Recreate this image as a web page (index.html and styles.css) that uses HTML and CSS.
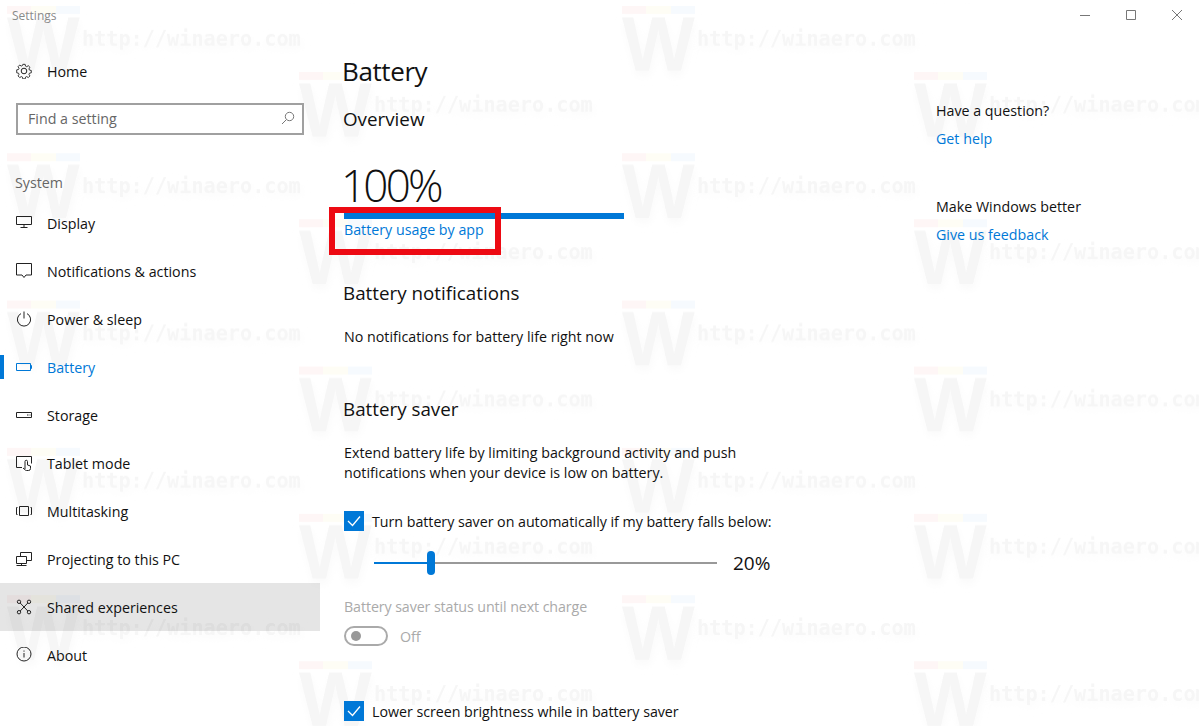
FILE: index.html
```html
<!DOCTYPE html>
<html lang="en">
    <head>
        <meta charset="utf-8">
        <title>Settings</title>
        <link rel="stylesheet" href="styles.css">
    </head>
    <body>
        <svg class="watermark" width="1199" height="726" aria-hidden="true">
            <defs>
                <filter id="soft" x="-20%" y="-20%" width="140%" height="150%"><feGaussianBlur stdDeviation="4"/></filter>
                <filter id="crisp" x="-5%" y="-5%" width="110%" height="110%"><feGaussianBlur stdDeviation="0.5"/></filter>
                <pattern id="wm" width="615" height="147.3" patternUnits="userSpaceOnUse" x="0" y="0">
                    <g id="mark">
                        <text x="8" y="76" class="wm-w wm-glow" filter="url(#soft)">W</text>
                        <text x="7" y="71" class="wm-w" filter="url(#crisp)">W</text>
                        <rect x="7" y="6" width="24" height="8" fill="#fef6f6"/>
                        <rect x="31" y="6" width="25" height="8" fill="#fefdf5"/>
                        <rect x="56" y="6" width="24" height="8" fill="#f6fafe"/>
                        <text x="83" y="50" class="wm-url wm-glow" filter="url(#soft)">http://winaero.com</text>
                        <text x="82" y="46" class="wm-url" filter="url(#crisp)">http://winaero.com</text>
                    </g>
                </pattern>
                <pattern id="wm2" width="615" height="147.3" patternUnits="userSpaceOnUse" x="292" y="66">
                    <use href="#mark"/>
                </pattern>
            </defs>
            <rect width="1199" height="726" fill="url(#wm)"/>
            <rect width="1199" height="726" fill="url(#wm2)"/>
        </svg>

        <div class="window">
            <aside class="sidebar">
                <div class="app-title">Settings</div>
                <a class="nav-item home">
                    <svg class="icon" viewBox="0 0 16 16"><path d="M6.7.6h2.6l.4 2 1.3.6 1.8-1.1 1.8 1.8-1.1 1.8.6 1.3 2 .4v2.6l-2 .4-.6 1.3 1.1 1.8-1.8 1.8-1.8-1.1-1.3.6-.4 2H6.7l-.4-2-1.3-.6-1.8 1.1-1.8-1.8 1.1-1.8-.6-1.3-2-.4V6.7l2-.4.6-1.3-1.1-1.8 1.8-1.8 1.8 1.1 1.3-.6z" transform="translate(.8 .8) scale(.9)"/><circle cx="8" cy="8" r="2.8"/></svg>
                    <span>Home</span>
                </a>
                <div class="search">
                    <span>Find a setting</span>
                    <svg class="search-icon" viewBox="0 0 14 14"><circle cx="8.5" cy="5.5" r="4.2"/><path d="M5.5 8.5L1 13"/></svg>
                </div>
                <div class="group-title">System</div>
                <nav>
                    <a class="nav-item">
                        <svg class="icon" viewBox="0 0 16 16"><path d="M.5 1.500h15v8H.5zM8 9.500v2.500M4.500 12.500h7"/></svg>
                        <span>Display</span>
                    </a>
                    <a class="nav-item">
                        <svg class="icon" viewBox="0 0 16 16"><path d="M.5.5h15v11.500h-5.500L8 14.500 6 12H.5z"/></svg>
                        <span>Notifications &amp; actions</span>
                    </a>
                    <a class="nav-item">
                        <svg class="icon" viewBox="0 0 16 16"><path d="M5 2.600a6.600 6.600 0 1 0 6 0M8 .5v7"/></svg>
                        <span>Power &amp; sleep</span>
                    </a>
                    <a class="nav-item active">
                        <svg class="icon" viewBox="0 0 16 16"><path d="M.5 4.500h14v7H.5zM14.500 6.500h1v3h-1"/></svg>
                        <span>Battery</span>
                    </a>
                    <a class="nav-item">
                        <svg class="icon" viewBox="0 0 16 16"><path d="M.5 5.500h15v5H.5zM11 8h1.500M13.500 8h1"/></svg>
                        <span>Storage</span>
                    </a>
                    <a class="nav-item">
                        <svg class="icon" viewBox="0 0 16 16"><path d="M6 12.500H.5v-11h15v7M9 14V6.500a1.200 1.200 0 0 1 2.500 0V10l3 1v2.500a2 2 0 0 1-2 2H10.500a2 2 0 0 1-1.500-.8L7 13"/></svg>
                        <span>Tablet mode</span>
                    </a>
                    <a class="nav-item">
                        <svg class="icon" viewBox="0 0 16 16"><path d="M3.500 3.500h9v9h-9zM1.500 4.500H.5v7h1M14.500 4.500h1v7h-1"/></svg>
                        <span>Multitasking</span>
                    </a>
                    <a class="nav-item">
                        <svg class="icon" viewBox="0 0 16 16"><path d="M4.500 5V1.500h11v8H11M.5 5.500h10v7H.5zM.5 14.500h10M5.500 12.500v2"/></svg>
                        <span>Projecting to this PC</span>
                    </a>
                    <a class="nav-item hovered">
                        <svg class="icon" viewBox="0 0 16 16"><circle cx="3" cy="2.800" r="1.700"/><circle cx="13" cy="2.800" r="1.700"/><circle cx="3" cy="13.200" r="1.700"/><circle cx="13" cy="13.200" r="1.700"/><path d="M4.200 4l7.600 8M11.800 4l-7.600 8"/></svg>
                        <span>Shared experiences</span>
                    </a>
                    <a class="nav-item">
                        <svg class="icon" viewBox="0 0 16 16"><circle cx="8" cy="7" r="7"/><path d="M8 6v4.500M8 3.500v1.200"/></svg>
                        <span>About</span>
                    </a>
                </nav>
            </aside>

            <main class="content">
                <h1>Battery</h1>
                <h2 class="overview">Overview</h2>
                <div class="percent">100%</div>
                <div class="meter"></div>
                <a class="link usage">Battery usage by app</a>

                <h2 class="notif-title">Battery notifications</h2>
                <p class="notif-text">No notifications for battery life right now</p>

                <h2 class="saver-title">Battery saver</h2>
                <p class="saver-text">Extend battery life by limiting background activity and push<br>notifications when your device is low on battery.</p>

                <label class="check auto">
                    <svg class="box" viewBox="0 0 20 20"><path d="M4 10l4.500 4.500L16 5.500"/></svg>
                    <span>Turn battery saver on automatically if my battery falls below:</span>
                </label>
                <div class="slider-row">
                    <div class="slider"><div class="slider-fill"></div><div class="slider-thumb"></div></div>
                    <span class="slider-value">20%</span>
                </div>
                <div class="disabled status">Battery saver status until next charge</div>
                <div class="toggle-row disabled">
                    <span class="toggle"><i></i></span>
                    <span>Off</span>
                </div>
                <label class="check lower">
                    <svg class="box" viewBox="0 0 20 20"><path d="M4 10l4.500 4.500L16 5.500"/></svg>
                    <span>Lower screen brightness while in battery saver</span>
                </label>
            </main>

            <aside class="help">
                <div class="help-block">
                    <div>Have a question?</div>
                    <a class="link">Get help</a>
                </div>
                <div class="help-block">
                    <div>Make Windows better</div>
                    <a class="link">Give us feedback</a>
                </div>
            </aside>

            <div class="controls">
                <svg viewBox="0 0 10 10"><path d="M0 5.500h10"/></svg>
                <svg viewBox="0 0 10 10"><path d="M.5.500h9v9h-9z"/></svg>
                <svg viewBox="0 0 10 10"><path d="M0 0l10 10M10 0L0 10"/></svg>
            </div>
        </div>
        <div class="highlight"></div>
    </body>
</html>
```

FILE: styles.css
```css
* {
    margin: 0;
    padding: 0;
    box-sizing: border-box;
}
html, body {
    height: 726px;
    overflow: hidden;
}
body {
    position: relative;
    background-color: #fff;
    color: #111;
    font-family: "Open Sans", "Noto Sans", sans-serif;
    font-size: 14.25px;
}
a {
    display: block;
}
h1, h2 {
    font-weight: 400;
}

.watermark {
    position: absolute;
    left: 0;
    top: 0;
}
.wm-w {
    font-family: "Liberation Sans", sans-serif;
    font-weight: 700;
    font-size: 77px;
    fill: #f6f6f6;
}
.wm-url {
    font-family: "DejaVu Sans Mono", "Liberation Mono", monospace;
    font-weight: 700;
    font-size: 20.2px;
    fill: #f6f6f6;
}
.wm-glow {
    fill: #fafafa;
}

.window {
    position: relative;
    display: flex;
    height: 726px;
}
.sidebar {
    width: 320px;
    flex-shrink: 0;
}
.app-title {
    padding: 7px 0 0 12px;
    height: 47px;
    font-size: 12px;
    color: #8a8a8a;
}
.nav-item {
    display: flex;
    align-items: center;
    height: 48px;
    padding-left: 16px;
    position: relative;
}
.nav-item span {
    margin-left: 15px;
}
.icon {
    width: 16px;
    height: 16px;
    fill: none;
    stroke: #222;
    stroke-width: 1;
}
.nav-item.active {
    color: #0078d7;
}
.nav-item.active .icon {
    stroke: #0078d7;
}
.nav-item.active::before {
    content: "";
    position: absolute;
    left: 0;
    top: 12px;
    width: 4px;
    height: 24px;
    background-color: #0078d7;
}
.nav-item.hovered {
    background-color: rgba(0, 0, 0, 0.1);
}
.search {
    display: flex;
    align-items: center;
    justify-content: space-between;
    width: 288px;
    height: 32px;
    margin: 8px 0 0 16px;
    padding: 0 7px 2px 10px;
    border: 2px solid #a0a0a0;
    color: #666;
}
.search-icon {
    width: 14px;
    height: 14px;
    fill: none;
    stroke: #777;
}
.group-title {
    padding: 38px 0 0 15px;
    height: 64px;
    color: #666;
}

.content {
    width: 596px;
    flex-shrink: 0;
    padding: 53px 0 0 24px;
}
h1 {
    font-size: 26px;
    letter-spacing: -0.4px;
    line-height: 36px;
    margin-left: -2px;
}
h2 {
    font-size: 18.8px;
    line-height: 26px;
    margin-left: -1px;
}
.overview {
    margin-top: 17px;
}
.percent {
    margin-top: 25px;
    font-size: 44px;
    font-weight: 300;
    letter-spacing: -2.8px;
    line-height: 56px;
    margin-left: -3px;
}
.meter {
    width: 280px;
    height: 6px;
    background-color: #0078d7;
}
.link {
    color: #0078d7;
}
.usage {
    margin-top: 1px;
    line-height: 20px;
}
.notif-title {
    margin-top: 40px;
}
.notif-text {
    margin-top: 21px;
    line-height: 20px;
}
.saver-title {
    margin-top: 49px;
}
.saver-text {
    margin-top: 21px;
    line-height: 20px;
}
.check {
    display: flex;
    align-items: center;
    gap: 8px;
}
.check span {
    letter-spacing: -0.03px;
}
.box {
    width: 20px;
    height: 20px;
    background-color: #0078d7;
    fill: none;
    stroke: #fff;
    stroke-width: 1.300;
}
.auto {
    margin-top: 28px;
}
.slider-row {
    display: flex;
    align-items: center;
    margin-top: 19px;
    padding-left: 30px;
}
.slider {
    position: relative;
    width: 343px;
    height: 2px;
    background-color: #999;
}
.slider-fill {
    width: 57px;
    height: 2px;
    background-color: #0078d7;
}
.slider-thumb {
    position: absolute;
    left: 53px;
    top: -11px;
    width: 8px;
    height: 24px;
    border-radius: 4px;
    background-color: #0078d7;
}
.slider-value {
    margin-left: 16px;
    font-size: 19px;
}
.disabled {
    color: #aaa;
}
.status {
    margin-top: 21px;
    line-height: 20px;
    letter-spacing: -0.1px;
}
.toggle-row {
    display: flex;
    align-items: center;
    gap: 12px;
    margin-top: 9px;
}
.toggle {
    display: flex;
    align-items: center;
    width: 44px;
    height: 20px;
    padding-left: 5px;
    border: 2px solid #aaa;
    border-radius: 10px;
}
.toggle i {
    width: 10px;
    height: 10px;
    border-radius: 50%;
    background-color: #999;
}
.lower {
    margin-top: 55px;
}

.help {
    padding: 101px 0 0 20px;
}
.help-block {
    height: 96px;
}
.help-block .link {
    margin-top: 9px;
}

.controls {
    position: absolute;
    top: 10px;
    right: 17px;
    display: flex;
    gap: 36px;
}
.controls svg {
    width: 10px;
    height: 10px;
    fill: none;
    stroke: #777;
}

.highlight {
    position: absolute;
    left: 329px;
    top: 207px;
    width: 172px;
    height: 48px;
    border: 6px solid #ed0a13;
}
```
